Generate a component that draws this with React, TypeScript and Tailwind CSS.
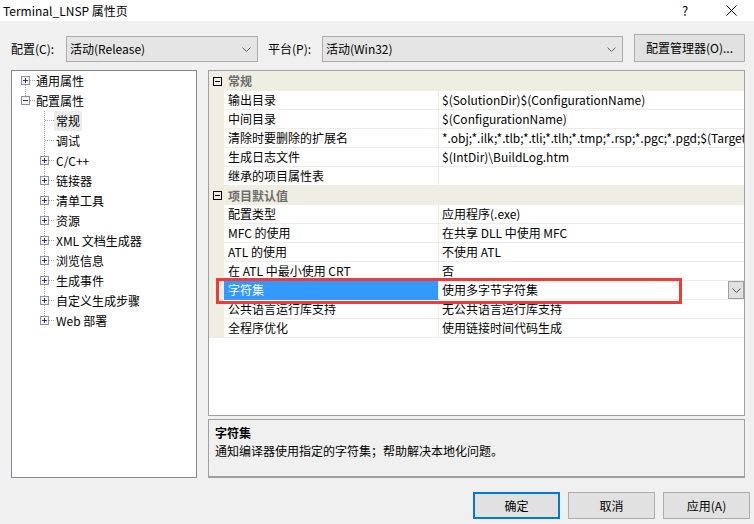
import React from "react";

const Chevron = ({ c = "#606060" }: { c?: string }) => (
  <svg width="9" height="5" viewBox="0 0 9 5">
    <path d="M0.5 0.5 L4.5 4.5 L8.5 0.5" fill="none" stroke={c} strokeWidth="1" />
  </svg>
);

type TreeKind = "rootFirst" | "rootLast" | "leaf" | "child" | "childLast";

const Box = ({ x, minus }: { x: number; minus?: boolean }) => (
  <g>
    <rect x={x + 0.5} y={5.5} width={8} height={8} fill="#f4f4f4" stroke="#919191" />
    <line x1={x + 2} y1={9.5} x2={x + 7} y2={9.5} stroke="#1e3a7b" />
    {!minus && <line x1={x + 4.5} y1={7} x2={x + 4.5} y2={12} stroke="#1e3a7b" />}
  </g>
);

const TreeLines = ({ kind }: { kind: TreeKind }) => {
  const dot = { stroke: "#a0a0a0", strokeDasharray: "1 1", strokeWidth: 1 } as const;
  return (
    <svg width="44" height="20" viewBox="0 0 44 20" className="shrink-0">
      {kind === "rootFirst" && (
        <>
          <line x1={13.5} y1={14} x2={13.5} y2={20} {...dot} />
          <line x1={18} y1={9.5} x2={23} y2={9.5} {...dot} />
          <Box x={9} />
        </>
      )}
      {kind === "rootLast" && (
        <>
          <line x1={13.5} y1={0} x2={13.5} y2={6} {...dot} />
          <line x1={18} y1={9.5} x2={23} y2={9.5} {...dot} />
          <Box x={9} minus />
        </>
      )}
      {kind === "leaf" && (
        <>
          <line x1={32.5} y1={0} x2={32.5} y2={20} {...dot} />
          <line x1={33} y1={9.5} x2={42} y2={9.5} {...dot} />
        </>
      )}
      {(kind === "child" || kind === "childLast") && (
        <>
          <line x1={32.5} y1={0} x2={32.5} y2={6} {...dot} />
          {kind === "child" && <line x1={32.5} y1={14} x2={32.5} y2={20} {...dot} />}
          <line x1={37} y1={9.5} x2={42} y2={9.5} {...dot} />
          <Box x={28} />
        </>
      )}
    </svg>
  );
};

const tree: { label: string; kind: TreeKind; sel?: boolean }[] = [
  { label: "通用属性", kind: "rootFirst" },
  { label: "配置属性", kind: "rootLast" },
  { label: "常规", kind: "leaf", sel: true },
  { label: "调试", kind: "leaf" },
  { label: "C/C++", kind: "child" },
  { label: "链接器", kind: "child" },
  { label: "清单工具", kind: "child" },
  { label: "资源", kind: "child" },
  { label: "XML 文档生成器", kind: "child" },
  { label: "浏览信息", kind: "child" },
  { label: "生成事件", kind: "child" },
  { label: "自定义生成步骤", kind: "child" },
  { label: "Web 部署", kind: "childLast" },
];

const cat1: [string, string][] = [
  ["输出目录", "$(SolutionDir)$(ConfigurationName)"],
  ["中间目录", "$(ConfigurationName)"],
  ["清除时要删除的扩展名", "*.obj;*.ilk;*.tlb;*.tli;*.tlh;*.tmp;*.rsp;*.pgc;*.pgd;$(TargetPath)"],
  ["生成日志文件", "$(IntDir)\\BuildLog.htm"],
  ["继承的项目属性表", ""],
];

const cat2: [string, string][] = [
  ["配置类型", "应用程序(.exe)"],
  ["MFC 的使用", "在共享 DLL 中使用 MFC"],
  ["ATL 的使用", "不使用 ATL"],
  ["在 ATL 中最小使用 CRT", "否"],
  ["字符集", "使用多字节字符集"],
  ["公共语言运行库支持", "无公共语言运行库支持"],
  ["全程序优化", "使用链接时间代码生成"],
];

const CatBox = () => (
  <svg width="9" height="9" viewBox="0 0 9 9">
    <rect x="0.5" y="0.5" width="8" height="8" fill="none" stroke="#000" />
    <line x1="2" y1="4.5" x2="7" y2="4.5" stroke="#000" />
  </svg>
);

const CatRow = ({ label, h }: { label: string; h: string }) => (
  <div className={`flex items-center bg-[#f0ede3] ${h}`}>
    <div className="w-[15px] flex justify-center pl-[1px]">
      <CatBox />
    </div>
    <div className="pl-[4px] font-bold text-[#6d6d6d]">{label}</div>
  </div>
);

const PropRow = ({ name, value, sel }: { name: string; value: string; sel?: boolean }) => (
  <div className="flex h-[19px]">
    <div className="w-[15px] bg-[#f0ede3] shrink-0" />
    <div
      className={`w-[215px] shrink-0 pl-[4px] leading-[18px] whitespace-nowrap overflow-hidden border-b border-r border-[#efede3] ${
        sel ? "bg-[#3399ff] text-white border-b-[#3399ff]" : "bg-white text-black"
      }`}
    >
      {name}
    </div>
    <div className="flex-1 min-w-0 bg-white border-b border-[#efede3] flex items-start">
      <div className="flex-1 min-w-0 pl-[3px] leading-[18px] whitespace-nowrap overflow-hidden">{value}</div>
      {sel && (
        <div className="w-[16px] h-[18px] shrink-0 bg-[#e0e0e0] border border-[#a0a0a0] flex items-center justify-center">
          <Chevron c="#505050" />
        </div>
      )}
    </div>
  </div>
);

export default function App() {
  return (
    <div className="w-[754px] h-[524px] bg-[#f0f0f0] text-[12px] text-black font-['Noto_Sans_CJK_SC','Noto_Sans',sans-serif] overflow-hidden flex flex-col">
      {/* title bar */}
      <div className="h-[21px] bg-white flex items-center justify-between pl-[3px] shrink-0">
        <div className="leading-none pt-[1px]">Terminal_LNSP 属性页</div>
        <div className="flex items-center h-full">
          <div className="w-[46px] text-center text-[13px] leading-none">?</div>
          <div className="w-[46px] flex justify-center">
            <svg width="11" height="11" viewBox="0 0 11 11">
              <path d="M0.5 0.5 L10.5 10.5 M10.5 0.5 L0.5 10.5" stroke="#000" strokeWidth="1" />
            </svg>
          </div>
        </div>
      </div>

      {/* toolbar */}
      <div className="h-[49px] shrink-0 flex items-start pt-[13px] pl-[11px]">
        <div className="mt-[2px] h-[26px] flex items-center w-[55px]">配置(C):</div>
        <div className="mt-[2px] h-[26px] w-[192px] bg-[#e5e5e5] border border-[#acacac] flex items-center justify-between pl-[3px] pr-[6px]">
          <span>活动(Release)</span>
          <Chevron />
        </div>
        <div className="mt-[2px] h-[26px] flex items-center ml-[10px] w-[54px]">平台(P):</div>
        <div className="mt-[2px] h-[26px] w-[301px] bg-[#e5e5e5] border border-[#acacac] flex items-center justify-between pl-[3px] pr-[6px]">
          <span>活动(Win32)</span>
          <Chevron />
        </div>
        <div className="ml-[11px] h-[28px] w-[111px] bg-[#e1e1e1] border border-[#adadad] flex items-center justify-center">
          配置管理器(O)...
        </div>
      </div>

      {/* main */}
      <div className="h-[408px] shrink-0 flex">
        <div className="ml-[11px] w-[186px] h-full bg-white border border-[#828790]">
          {tree.map((t) => (
            <div key={t.label} className="h-[20px] flex items-center">
              <TreeLines kind={t.kind} />
              <div
                className={`leading-[20px] ${
                  t.kind === "rootFirst" || t.kind === "rootLast" ? "-ml-[20px]" : ""
                } ${t.sel ? "bg-[#ebebeb] px-[2px] -ml-[2px]" : ""}`}
              >
                {t.label}
              </div>
            </div>
          ))}
        </div>

        <div className="ml-[11px] w-[537px] h-full flex flex-col">
          <div className="relative h-[346px] bg-white border border-[#a0a0a0] overflow-hidden">
            <CatRow label="常规" h="h-[20px]" />
            {cat1.map(([n, v]) => (
              <PropRow key={n} name={n} value={v} />
            ))}
            <CatRow label="项目默认值" h="h-[19px]" />
            {cat2.map(([n, v]) => (
              <PropRow key={n} name={n} value={v} sel={n === "字符集"} />
            ))}
            <div className="absolute left-[7px] top-[207px] w-[466px] h-[26px] border-[3px] border-[#ee3b3b] pointer-events-none" />
          </div>
          <div className="mt-[3px] h-[59px] bg-[#f0f0f0] border border-[#a0a0a0] border-b-2 pl-[6px] pt-[4px]">
            <div className="font-bold leading-[18px]">字符集</div>
            <div className="leading-[18px]">通知编译器使用指定的字符集；帮助解决本地化问题。</div>
          </div>
        </div>
      </div>

      {/* buttons */}
      <div className="mt-[14px] flex justify-end gap-[8px] pr-[4px]">
        <div className="w-[87px] h-[27px] bg-[#e1e1e1] border-2 border-[#0078d7] flex items-center justify-center">确定</div>
        <div className="w-[87px] h-[27px] bg-[#e1e1e1] border border-[#adadad] flex items-center justify-center">取消</div>
        <div className="w-[87px] h-[27px] bg-[#e1e1e1] border border-[#adadad] flex items-center justify-center">应用(A)</div>
      </div>
    </div>
  );
}
